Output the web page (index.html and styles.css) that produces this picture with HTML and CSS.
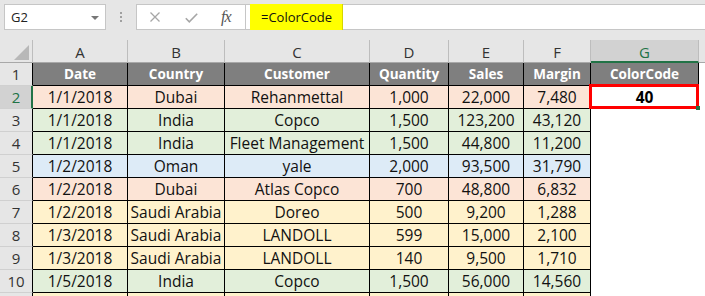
FILE: index.html
```html
<!DOCTYPE html>
<html>
<head>
<meta charset="utf-8">
<link rel="stylesheet" href="styles.css">
</head>
<body>
<div class="bar">
  <div class="namebox"><span>G2</span><span class="arrow"></span></div>
  <div class="dots"><i></i><i></i><i></i></div>
  <div class="fxbox">
    <svg class="ico" width="10" height="10" viewBox="0 0 10 10"><path d="M0.5 0.5 L9.5 9.5 M9.5 0.5 L0.5 9.5" stroke="#a6a6a6" stroke-width="1.3" fill="none"/></svg>
    <svg class="ico chk" width="13" height="10" viewBox="0 0 13 10"><path d="M0.8 5.2 L4.3 8.8 L12.2 0.8" stroke="#a6a6a6" stroke-width="1.6" fill="none"/></svg>
    <span class="fx">fx</span>
  </div>
  <div class="formula"><span class="hl">=ColorCode</span></div>
</div>
<div class="sheet">
  <div class="corner"><span class="tri"></span></div>
  <div class="ch">A</div><div class="ch">B</div><div class="ch">C</div><div class="ch">D</div><div class="ch">E</div><div class="ch">F</div><div class="ch sel">G</div><div class="ch last"></div>

  <div class="rh">1</div>
  <div class="c hd">Date</div><div class="c hd">Country</div><div class="c hd">Customer</div><div class="c hd">Quantity</div><div class="c hd">Sales</div><div class="c hd">Margin</div><div class="c hd">ColorCode</div><div class="w"></div>

  <div class="rh rsel">2</div>
  <div class="c pe">1/1/2018</div><div class="c pe">Dubai</div><div class="c pe">Rehanmettal</div><div class="c pe">1,000</div><div class="c pe">22,000</div><div class="c pe">7,480</div><div class="c act">40</div><div class="w"></div>

  <div class="rh">3</div>
  <div class="c gr">1/1/2018</div><div class="c gr">India</div><div class="c gr">Copco</div><div class="c gr">1,500</div><div class="c gr">123,200</div><div class="c gr">43,120</div><div class="w"></div><div class="w"></div>

  <div class="rh">4</div>
  <div class="c gr">1/1/2018</div><div class="c gr">India</div><div class="c gr">Fleet Management</div><div class="c gr">1,500</div><div class="c gr">44,800</div><div class="c gr">11,200</div><div class="w"></div><div class="w"></div>

  <div class="rh">5</div>
  <div class="c bl">1/2/2018</div><div class="c bl">Oman</div><div class="c bl">yale</div><div class="c bl">2,000</div><div class="c bl">93,500</div><div class="c bl">31,790</div><div class="w"></div><div class="w"></div>

  <div class="rh">6</div>
  <div class="c pe">1/2/2018</div><div class="c pe">Dubai</div><div class="c pe">Atlas Copco</div><div class="c pe">700</div><div class="c pe">48,800</div><div class="c pe">6,832</div><div class="w"></div><div class="w"></div>

  <div class="rh">7</div>
  <div class="c ye">1/2/2018</div><div class="c ye">Saudi Arabia</div><div class="c ye">Doreo</div><div class="c ye">500</div><div class="c ye">9,200</div><div class="c ye">1,288</div><div class="w"></div><div class="w"></div>

  <div class="rh">8</div>
  <div class="c ye">1/3/2018</div><div class="c ye">Saudi Arabia</div><div class="c ye">LANDOLL</div><div class="c ye">599</div><div class="c ye">15,000</div><div class="c ye">2,100</div><div class="w"></div><div class="w"></div>

  <div class="rh">9</div>
  <div class="c ye">1/3/2018</div><div class="c ye">Saudi Arabia</div><div class="c ye">LANDOLL</div><div class="c ye">140</div><div class="c ye">9,500</div><div class="c ye">1,710</div><div class="w"></div><div class="w"></div>

  <div class="rh">10</div>
  <div class="c gr">1/5/2018</div><div class="c gr">India</div><div class="c gr">Copco</div><div class="c gr">1,500</div><div class="c gr">56,000</div><div class="c gr">14,560</div><div class="w"></div><div class="w"></div>

  <div class="rh"></div>
  <div class="c ye"></div><div class="c ye"></div><div class="c ye"></div><div class="c ye"></div><div class="c ye"></div><div class="c ye"></div><div class="w"></div><div class="w"></div>
</div>
</body>
</html>
```

FILE: styles.css
```css
* { box-sizing: border-box; }
html, body { margin: 0; padding: 0; background: #fff; overflow: hidden; }
body { width: 705px; height: 296px; font-family: "Open Sans", "Noto Sans", sans-serif; }

.bar {
  height: 40px;
  background: #e6e6e6;
  display: flex;
  align-items: flex-start;
  padding: 4px 0 0 4px;
}
.namebox {
  width: 102px;
  height: 26px;
  background: #fff;
  border: 1px solid #c6c6c6;
  display: flex;
  align-items: center;
  justify-content: space-between;
  padding: 0 6px 0 6px;
  font-size: 13px;
  color: #222;
}
.arrow {
  width: 0; height: 0;
  border-left: 4px solid transparent;
  border-right: 4px solid transparent;
  border-top: 4px solid #777;
  margin-top: 1px;
}
.dots {
  width: 30px;
  height: 26px;
  display: flex;
  flex-direction: column;
  align-items: center;
  justify-content: center;
  gap: 2px;
}
.dots i { display: block; width: 2px; height: 2px; background: #a0a0a0; }
.fxbox {
  width: 110px;
  height: 26px;
  background: #fff;
  border: 1px solid #c6c6c6;
  display: flex;
  align-items: center;
  padding-left: 13px;
}
.ico { display: block; }
.chk { margin-left: 25px; margin-top: 1px; }
.fx {
  margin-left: 23px;
  font-family: "Liberation Serif", "DejaVu Serif", serif;
  font-style: italic;
  font-size: 16px;
  color: #555;
  letter-spacing: -1px;
}
.formula {
  flex: 1;
  height: 26px;
  background: #fff;
  box-shadow: inset 0 1px #c6c6c6, inset 0 -1px #c6c6c6;
  display: flex;
  padding-left: 4px;
}
.hl {
  background: #ffff00;
  height: 26px;
  display: flex;
  align-items: center;
  padding: 0 10px 0 11px;
  font-size: 13px;
  color: #111;
  border-right: 1px solid #d6d600;
}

.sheet {
  display: grid;
  grid-template-columns: 33px 95px 97px 145px 79px 75px 67px 108px 1fr;
  grid-auto-rows: 23px;
  font-size: 15.5px;
}
.sheet > div {
  display: flex;
  align-items: center;
  justify-content: center;
  white-space: nowrap;
}
.corner {
  background: #e6e6e6;
  border-right: 1px solid #bdbdbd;
  border-bottom: 1px solid #a8a8a8;
  position: relative;
}
.tri {
  position: absolute;
  right: 3px;
  bottom: 2px;
  width: 0; height: 0;
  border-left: 15px solid transparent;
  border-bottom: 15px solid #b8b8b8;
}
.ch {
  background: #e6e6e6;
  border-right: 1px solid #bdbdbd;
  border-bottom: 1px solid #a8a8a8;
  color: #333;
  font-size: 15px;
  padding-top: 1px;
}
.ch.sel {
  background: #d2d2d2;
  color: #217346;
  border-bottom: 2px solid #217346;
  padding-top: 2px;
}
.ch.last { border-right: none; }
.rh {
  background: #e6e6e6;
  border-right: 1px solid #000;
  border-bottom: 1px solid #d0d0d0;
  color: #333;
  font-size: 15px;
}
.rh.rsel {
  background: #d2d2d2;
  color: #217346;
  border-right: 2px solid #217346;
  padding-left: 1px;
}
.c {
  border-right: 1px solid #000;
  border-bottom: 1px solid #000;
  color: #111;
}
.hd { background: #7f7f7f; color: #fff; font-weight: 700; font-size: 13.5px; }
.pe { background: #fce4d6; }
.gr { background: #e2efda; }
.bl { background: #ddebf7; }
.ye { background: #fff2cc; }
.w { background: #fff; }
.act {
  background: #fff;
  position: relative;
  font-weight: 700;
  color: #000;
}
.act::before {
  content: "";
  position: absolute;
  left: -2px; top: -2px; right: -1px; bottom: -1px;
  border: 3px solid #ff0000;
}
.act::after {
  content: "";
  position: absolute;
  right: -2px; bottom: -2px;
  width: 4px; height: 4px;
  background: #217346;
}
```
